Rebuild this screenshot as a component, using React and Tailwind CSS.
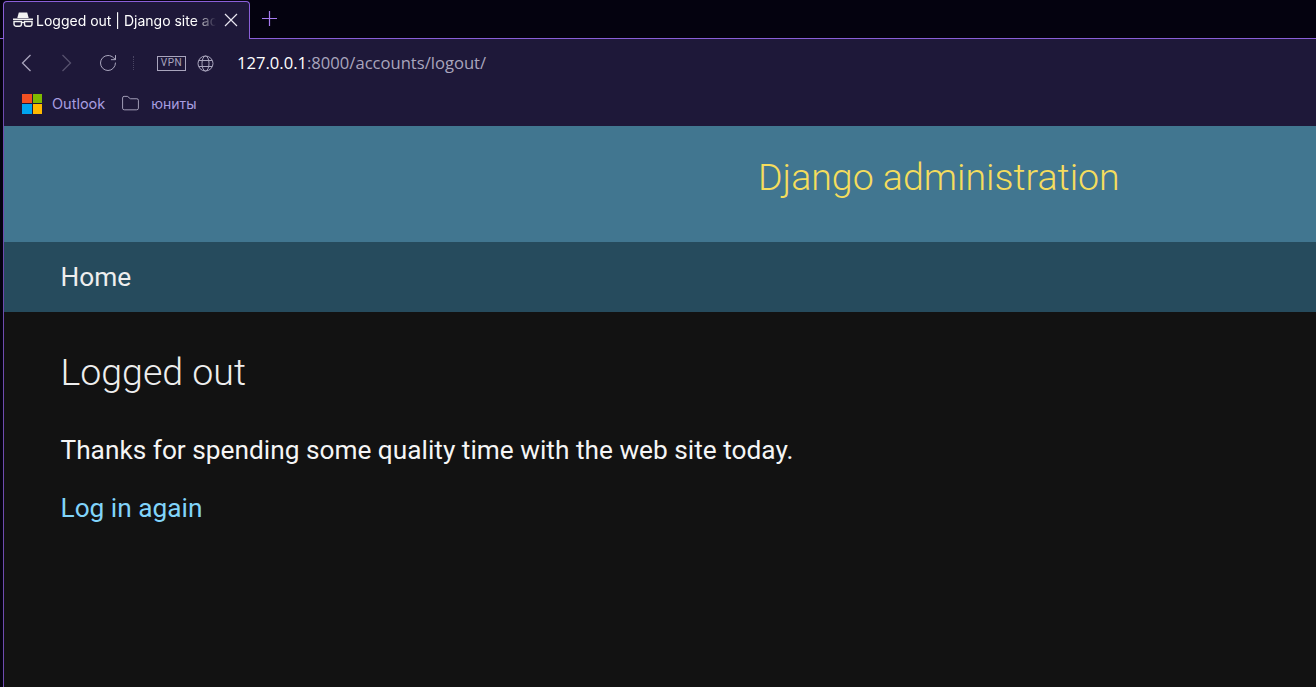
import React from "react";
import { RotateCw, Folder } from "lucide-react";

const TabIcon = () => (
  <svg width="20" height="16" viewBox="0 0 20 16" fill="none" className="shrink-0">
    <path d="M5.800 0.500h8.400l1.500 5.500H4.300z" fill="#f2f2f2" />
    <rect x="0" y="6.500" width="20" height="1.500" fill="#f2f2f2" />
    <path d="M1 9.500h7.500v2.500a2.300 2.300 0 0 1-2.300 2.300H3.300A2.300 2.300 0 0 1 1 12z" stroke="#f2f2f2" strokeWidth="1.400" />
    <path d="M11.500 9.500H19v2.500a2.300 2.300 0 0 1-2.300 2.300h-2.900a2.300 2.300 0 0 1-2.300-2.300z" stroke="#f2f2f2" strokeWidth="1.400" />
    <path d="M8.500 10.500h3" stroke="#f2f2f2" strokeWidth="1.200" />
  </svg>
);

const CloseIcon = () => (
  <svg width="14" height="14" viewBox="0 0 14 14" fill="none" className="ml-auto shrink-0">
    <path d="M1 1l12 12M13 1L1 13" stroke="#e8e6f0" strokeWidth="1.200" />
  </svg>
);

const PlusIcon = () => (
  <svg width="15" height="15" viewBox="0 0 15 15" fill="none" className="mb-[12px] ml-[12px]">
    <path d="M7.500 0v15M0 7.500h15" stroke="#a77bf0" strokeWidth="1.200" />
  </svg>
);

const BackIcon = ({ color, flip }) => (
  <svg width="11" height="18" viewBox="0 0 11 18" fill="none" className={flip ? "rotate-180" : ""}>
    <path d="M9.500 1L1.500 9l8 8" stroke={color} strokeWidth="1.300" />
  </svg>
);

const GlobeIcon = () => (
  <svg width="17" height="17" viewBox="0 0 17 17" fill="none" stroke="#a9a5bd" strokeWidth="1" className="ml-[11px]">
    <circle cx="8.500" cy="8.500" r="7.500" />
    <ellipse cx="8.500" cy="8.500" rx="3.500" ry="7.500" />
    <path d="M1.800 5.500h13.400M1.800 11.500h13.400" />
  </svg>
);

const WindowsLogo = () => (
  <div className="grid h-[20px] w-[20px] shrink-0 grid-cols-2 gap-px">
    <div className="bg-[#f25022]" />
    <div className="bg-[#7fba00]" />
    <div className="bg-[#00a4ef]" />
    <div className="bg-[#ffb900]" />
  </div>
);

export default function App() {
  return (
    <div className="flex h-[687px] w-[1316px] flex-col overflow-hidden bg-[#04020f] font-['Roboto',sans-serif]">
      {/* tab strip */}
      <div className="flex h-[39px] shrink-0 items-end border-b border-[#8a5fd8]">
        <div className="relative -mb-px ml-[3px] flex h-[38px] w-[247px] items-center rounded-t-[4px] border border-b-0 border-[#8a5fd8] bg-[#1e1839] pb-[1px] pl-[9px] pr-[11px] font-['Inter',sans-serif]">
          <TabIcon />
          <span className="ml-[3px] w-[180px] overflow-hidden whitespace-nowrap text-[14px] text-white [mask-image:linear-gradient(to_right,black_88%,transparent)]">
            Logged out | Django site admin
          </span>
          <CloseIcon />
        </div>
        <PlusIcon />
      </div>

      <div className="ml-[3px] flex min-h-0 flex-1 flex-col border-l border-[#6e4bb0]">
        {/* toolbar */}
        <div className="flex h-[48px] shrink-0 items-center bg-[#1e1839] pl-[17px]">
          <BackIcon color="#a9a5bd" />
          <span className="ml-[29px]">
            <BackIcon color="#56516d" flip />
          </span>
          <RotateCw size={20} strokeWidth={1.200} className="ml-[26px] text-[#a9a5bd]" />
          <span className="ml-[15px] h-[14px] border-l border-dotted border-[#4a4563]" />
          <span className="ml-[23px] flex h-[15px] w-[29px] items-center justify-center border border-[#a9a5bd] text-[10px] leading-none tracking-[0.5px] text-[#a9a5bd]">
            VPN
          </span>
          <GlobeIcon />
          <div className="ml-[23px] whitespace-nowrap font-['Open_Sans',sans-serif] text-[16.600px]">
            <span className="text-white">127.0.0.1</span>
            <span className="text-[#a9a5bd]">:8000/accounts/logout/</span>
          </div>
        </div>

        {/* bookmarks */}
        <div className="flex h-[39px] shrink-0 items-center bg-[#1e1839] pb-[6px] pl-[18px] font-['Inter',sans-serif] text-[14.500px] text-[#a89ee0]">
          <WindowsLogo />
          <span className="ml-[10px]">Outlook</span>
          <Folder size={19} strokeWidth={1} className="ml-[16px] text-[#c4c0d8]" />
          <span className="ml-[11px] text-[14px]">юниты</span>
        </div>

        {/* django header */}
        <div className="flex h-[116px] shrink-0 items-center bg-[#417690] pb-[14px] pl-[754px]">
          <h1 className="whitespace-nowrap text-[37.500px] font-light text-[#f5dd5d]">
            Django administration
          </h1>
        </div>

        {/* breadcrumbs */}
        <div className="flex h-[70px] shrink-0 items-center bg-[#264b5d] pl-[56.500px] pt-[2px] text-[26.250px] text-[#eeeeee]">
          Home
        </div>

        {/* content */}
        <div className="flex-1 bg-[#121212] pl-[56.500px] pt-[37px]">
          <h2 className="text-[37.500px] font-light leading-[46px] text-[#eeeeee]">Logged out</h2>
          <p className="mt-[37px] text-[26.250px] leading-[36px] text-[#f5f5f5]">
            Thanks for spending some quality time with the web site today.
          </p>
          <p className="mt-[22px] text-[26.250px] leading-[36px] text-[#81d4fa]">Log in again</p>
        </div>
      </div>
    </div>
  );
}
